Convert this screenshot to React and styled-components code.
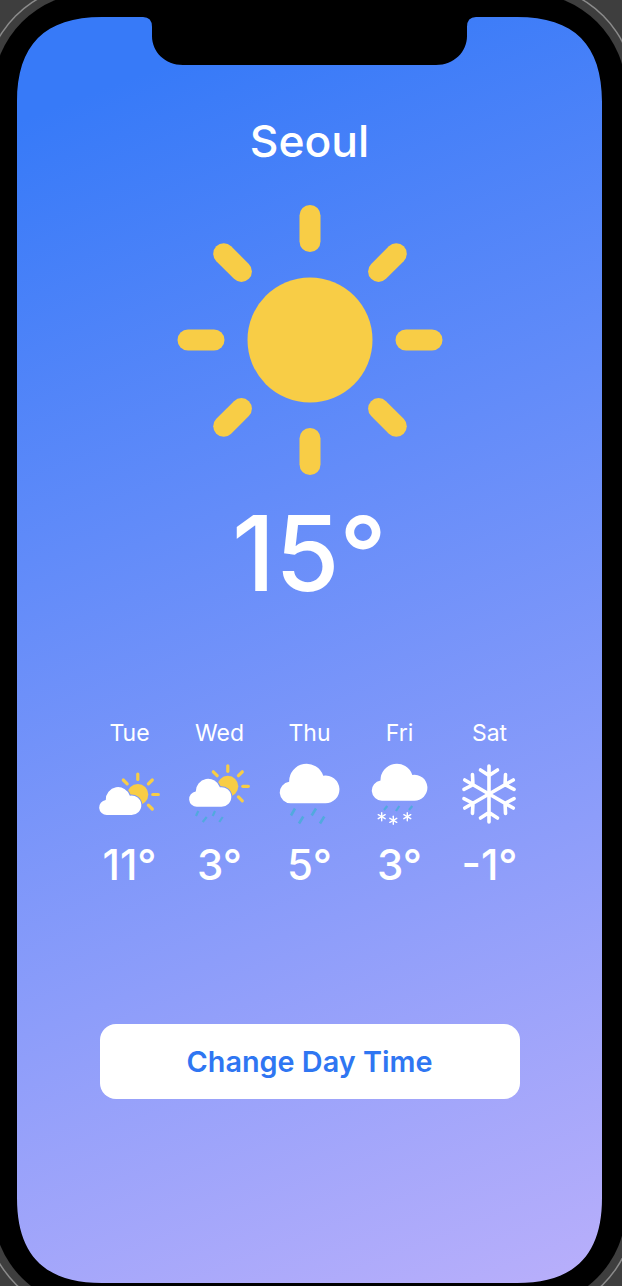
import React from "react";
import styled, { createGlobalStyle } from "styled-components";

const YELLOW = "#f8cd46";
const RAIN = "#52a9de";
const CLOUD_PATH = "M11 40A11 11 0 0 1 9.3 18.1A17.8 17.8 0 0 1 44 12A14.1 14.1 0 1 1 46 40Z";

const days = [
  { name: "Tue", temp: "11°", kind: "sunCloud" },
  { name: "Wed", temp: "3°", kind: "sunRain" },
  { name: "Thu", temp: "5°", kind: "rain" },
  { name: "Fri", temp: "3°", kind: "sleet" },
  { name: "Sat", temp: "-1°", kind: "snow" },
];

const Cloud = ({ x, y, width }) => (
  <path d={CLOUD_PATH} fill="#fff" transform={`translate(${x} ${y}) scale(${width / 60})`} />
);

const Rain = ({ lines, width }) => (
  <g stroke={RAIN} strokeWidth={width}>
    {lines.map(([x1, y1, x2, y2]) => (
      <line key={`${x1}-${y1}`} x1={x1} y1={y1} x2={x2} y2={y2} />
    ))}
  </g>
);

// little sun peeking out from behind the cloud
const PeekSun = ({ id, cy, cloudY }) => (
  <g>
    <mask id={id} maskUnits="userSpaceOnUse" x="0" y="0" width="70" height="66">
      <rect width="70" height="66" fill="#fff" />
      <path
        d={CLOUD_PATH}
        fill="#000"
        stroke="#000"
        strokeWidth="3"
        transform={`translate(4.3 ${cloudY}) scale(0.695)`}
      />
    </mask>
    <circle cx="42.8" cy={cy} r="10.5" fill={YELLOW} mask={`url(#${id})`} />
    <g stroke={YELLOW} strokeWidth="3.2" strokeLinecap="round" transform={`translate(42.8 ${cy})`}>
      {[-135, -90, -45, 0, 45].map((deg) => (
        <line key={deg} x1="15" y1="0" x2="20.5" y2="0" transform={`rotate(${deg})`} />
      ))}
    </g>
  </g>
);

const Flake = ({ x, y }) => (
  <g stroke="#fff" strokeWidth="1.4" strokeLinecap="round" transform={`translate(${x} ${y})`}>
    {[30, 90, 150].map((deg) => (
      <line key={deg} x1="-4" y1="0" x2="4" y2="0" transform={`rotate(${deg})`} />
    ))}
  </g>
);

const Snowflake = () => (
  <g
    stroke="#fff"
    strokeWidth="3.6"
    strokeLinecap="round"
    strokeLinejoin="round"
    fill="none"
    transform="translate(34 34)"
  >
    {[0, 60, 120, 180, 240, 300].map((deg) => (
      <path key={deg} d="M0 0V-28M-8.5 -24L0 -18.5L8.5 -24" transform={`rotate(${deg})`} />
    ))}
  </g>
);

const DayIcon = ({ kind }) => (
  <IconSvg viewBox="0 0 70 66">
    {kind === "sunCloud" && (
      <>
        <PeekSun id="sun-tue" cy={34.5} cloudY={27.3} />
        <Cloud x={4.3} y={27.3} width={41.7} />
      </>
    )}
    {kind === "sunRain" && (
      <>
        <PeekSun id="sun-wed" cy={26.3} cloudY={19} />
        <Cloud x={4.3} y={19} width={41.7} />
        <Rain
          width={2.2}
          lines={[
            [13.3, 51, 11, 56],
            [30, 51, 27.7, 56],
            [21.7, 57, 17.7, 62],
            [37.7, 57, 34.3, 62],
          ]}
        />
      </>
    )}
    {kind === "rain" && (
      <>
        <Cloud x={5} y={4} width={59} />
        <Rain
          width={2.6}
          lines={[
            [20, 48.5, 16, 55.5],
            [41, 48.5, 36.7, 55.5],
            [28.3, 56.5, 24, 63.5],
            [49.3, 56.5, 45, 63.5],
          ]}
        />
      </>
    )}
    {kind === "sleet" && (
      <>
        <Cloud x={7} y={4} width={55} />
        <Rain
          width={2.2}
          lines={[
            [22.3, 46, 19, 50],
            [34.3, 46, 31, 51],
            [47.3, 46, 44, 50],
          ]}
        />
        <Flake x={16.7} y={56.7} />
        <Flake x={28.3} y={60.3} />
        <Flake x={42.3} y={56.7} />
      </>
    )}
    {kind === "snow" && <Snowflake />}
  </IconSvg>
);

const BigSun = () => (
  <SunSvg viewBox="-140 -140 280 280">
    <circle r="62.5" fill={YELLOW} />
    <g stroke={YELLOW} strokeWidth="21" strokeLinecap="round">
      {[90, 270].map((deg) => (
        <line key={deg} x1="98.5" y1="0" x2="124.5" y2="0" transform={`rotate(${deg})`} />
      ))}
      {[0, 180].map((deg) => (
        <line key={deg} x1="96" y1="0" x2="122" y2="0" transform={`rotate(${deg})`} />
      ))}
      {[45, 135, 225, 315].map((deg) => (
        <line key={deg} x1="97" y1="0" x2="122" y2="0" transform={`rotate(${deg})`} />
      ))}
    </g>
  </SunSvg>
);

const App = () => {
  return (
    <>
      <GlobalStyle />
      <Bezel>
        <Screen>
          <City>Seoul</City>
          <BigSun />
          <CurrentTemp>15°</CurrentTemp>
          <Forecast>
            {days.map((day) => (
              <Day key={day.name}>
                <DayName>{day.name}</DayName>
                <DayIcon kind={day.kind} />
                <DayTemp>{day.temp}</DayTemp>
              </Day>
            ))}
          </Forecast>
          <ChangeButton>Change Day Time</ChangeButton>
        </Screen>
      </Bezel>
    </>
  );
};

const GlobalStyle = createGlobalStyle`
  html, body {
    margin: 0;
    height: 100%;
    overflow: hidden;
    background: #3e3e3e;
    font-family: Inter, "Liberation Sans", sans-serif;
  }
`;

const Bezel = styled.div`
  width: 585px;
  height: 1266px;
  margin: 17px 0 0 17px;
  border-radius: 75px;
  background: #000;
  box-shadow: 0 0 0 24px #000, 0 0 0 32px #3e3e3e, 0 0 0 33.5px #8c8c8c;
`;

const Screen = styled.div`
  box-sizing: border-box;
  width: 585px;
  height: 1266px;
  padding-top: 94px;
  display: flex;
  flex-direction: column;
  align-items: center;
  color: #fff;
  background: linear-gradient(159deg, #377af8 7%, #b9affb 100%);
  clip-path: path("M0 85C0 27.7 27.7 0 85 0L126 0Q135 0 135 10L135 19C135 35 148 48 166 48L419 48C437 48 450 35 450 19L450 10Q450 0 459 0L500 0C557.3 0 585 27.7 585 85L585 1181C585 1238.3 557.3 1266 500 1266L85 1266C27.7 1266 0 1238.3 0 1181Z");
`;

const City = styled.div`
  font-size: 44.4px;
  line-height: 60px;
  font-weight: 500;
`;

const SunSvg = styled.svg`
  width: 280px;
  height: 280px;
  margin-top: 29px;
`;

const CurrentTemp = styled.div`
  margin-top: 13px;
  font-size: 104px;
  line-height: 120px;
  font-weight: 500;
`;

const Forecast = styled.div`
  margin-top: 105px;
  display: flex;
`;

const Day = styled.div`
  width: 90px;
  display: flex;
  flex-direction: column;
  align-items: center;
`;

const DayName = styled.div`
  font-size: 23px;
  line-height: 30px;
  font-weight: 400;
`;

const IconSvg = styled.svg`
  width: 70px;
  height: 66px;
  margin-top: 12px;
`;

const DayTemp = styled.div`
  margin-top: 14px;
  font-size: 42px;
  line-height: 50px;
  font-weight: 500;
`;

const ChangeButton = styled.button`
  margin-top: 134px;
  width: 420px;
  height: 75px;
  border: 0;
  border-radius: 16px;
  background: #fff;
  color: #2f76f2;
  font-family: inherit;
  font-size: 28.8px;
  font-weight: 600;
`;

export default App;
